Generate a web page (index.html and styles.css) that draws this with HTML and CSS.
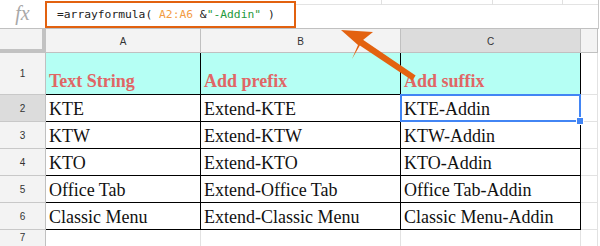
FILE: index.html
```html
<!DOCTYPE html>
<html>
<head>
<meta charset="utf-8">
<link rel="stylesheet" href="styles.css">
</head>
<body>
<div class="sheet">
  <div class="fbar">
    <div class="fx">fx</div>
    <div class="formula"><span class="ftext">=arrayformula( <span class="ref">A2:A6</span> &amp;<span class="str">"-Addin"</span> )</span></div>
    <div class="fbar-rest">
      <div class="tools"><i class="t1"></i><i class="t2"></i><i class="t3"></i></div>
    </div>
  </div>
  <div class="grid">
    <div class="corner"></div>
    <div class="ch">A</div>
    <div class="ch">B</div>
    <div class="ch sel-h">C</div>
    <div class="ch last"></div>

    <div class="rh">1</div>
    <div class="c head">Text String</div>
    <div class="c head">Add prefix</div>
    <div class="c head">Add suffix</div>
    <div class="e"></div>

    <div class="rh sel-h">2</div>
    <div class="c">KTE</div>
    <div class="c">Extend-KTE</div>
    <div class="c">KTE-Addin</div>
    <div class="e"></div>

    <div class="rh">3</div>
    <div class="c">KTW</div>
    <div class="c">Extend-KTW</div>
    <div class="c">KTW-Addin</div>
    <div class="e"></div>

    <div class="rh">4</div>
    <div class="c">KTO</div>
    <div class="c">Extend-KTO</div>
    <div class="c">KTO-Addin</div>
    <div class="e"></div>

    <div class="rh">5</div>
    <div class="c">Office Tab</div>
    <div class="c">Extend-Office Tab</div>
    <div class="c">Office Tab-Addin</div>
    <div class="e"></div>

    <div class="rh">6</div>
    <div class="c">Classic Menu</div>
    <div class="c">Extend-Classic Menu</div>
    <div class="c">Classic Menu-Addin</div>
    <div class="e"></div>

    <div class="rh r7">7</div>
    <div class="e"></div>
    <div class="e"></div>
    <div class="e"></div>
    <div class="e"></div>
  </div>
  <div class="selbox"><span class="handle"></span></div>
  <svg class="arrow" width="600" height="246" viewBox="0 0 600 246">
    <polygon points="341,30 373,32 363,40 352,59 358,45" fill="#e36210"/>
    <polygon points="362.6,39.5 415.6,75.5 412.4,80.5 358.4,44.5" fill="#e36210"/>
  </svg>
</div>
</body>
</html>
```

FILE: styles.css
```css
* { box-sizing: border-box; }
html, body { margin: 0; padding: 0; background: #fff; }
body { width: 600px; height: 246px; overflow: hidden; font-family: "Liberation Sans", Arial, sans-serif; }

.sheet { position: relative; width: 599px; }

.fbar {
  display: flex;
  height: 29px;
  border-bottom: 1px solid #c0c0c0;
  border-right: 1px solid #c8c8c8;
}
.fx {
  width: 45px;
  display: flex;
  align-items: center;
  justify-content: center;
  font-family: "Liberation Serif", serif;
  font-style: italic;
  font-size: 20px;
  color: #a8a8a8;
  padding-bottom: 1px;
}
.formula {
  width: 251px;
  margin-top: 1px;
  border: 2px solid #e2610f;
  display: flex;
  align-items: center;
  padding-left: 10px;
  padding-bottom: 1px;
  font-family: "DejaVu Sans Mono", "Liberation Mono", monospace;
  font-size: 11.3px;
  color: #222;
}
.ftext { white-space: pre; }
.formula .ref { color: #f39c43; }
.formula .str { color: #1f9a3c; }
.fbar-rest { flex: 1; }
.tools {
  height: 5px;
  border-bottom: 1px solid #e3e3e3;
  position: relative;
}
.tools i {
  position: absolute;
  top: 0;
  width: 1px;
  height: 5px;
  background: #e0e0e0;
}
.tools .t1 { left: 85px; }
.tools .t2 { left: 196px; }
.tools .t3 { left: 266px; }

.grid {
  display: grid;
  grid-template-columns: 46px 155px 200px 180px 17px;
  grid-template-rows: 24px 42px repeat(5, 27px) 16px;
  border-bottom: 1px solid #bdbdbd;
  width: 598px;
}

.corner {
  background: #f3f3f3;
  border-right: 4px solid #c2c2c2;
  border-bottom: 4px solid #c2c2c2;
}
.ch {
  background: #f3f3f3;
  border-right: 1px solid #c0c0c0;
  border-bottom: 1px solid #c0c0c0;
  display: flex;
  align-items: center;
  justify-content: center;
  font-size: 10px;
  color: #333;
  padding-top: 1px;
}
.ch.sel-h { background: #dcdcdc; }
.rh {
  background: #f3f3f3;
  border-right: 1px solid #c0c0c0;
  border-bottom: 1px solid #c8c8c8;
  display: flex;
  align-items: center;
  justify-content: center;
  font-size: 10px;
  color: #333;
}
.rh.sel-h { background: #dcdcdc; }
.rh.r7 { align-items: flex-start; padding-top: 2px; border-bottom: none; }

.c {
  border-right: 1px solid #000;
  border-bottom: 1px solid #000;
  display: flex;
  align-items: flex-end;
  padding: 0 0 2px 3px;
  font-family: "Liberation Serif", "Times New Roman", serif;
  font-size: 18px;
  line-height: 20px;
  color: #111;
  white-space: nowrap;
  overflow: hidden;
}
.c.head {
  background: #b5fff4;
  font-weight: bold;
  color: #e06666;
  padding-bottom: 3px;
}
.e {
  border-right: 1px solid #e2e2e2;
  border-bottom: 1px solid #e2e2e2;
}
.grid > .e:last-child, .grid > .e:nth-last-child(2), .grid > .e:nth-last-child(3), .grid > .e:nth-last-child(4) { border-bottom: none; }

.selbox {
  position: absolute;
  left: 400px;
  top: 94px;
  width: 181px;
  height: 28px;
  border: 2px solid #4285f4;
}
.handle {
  position: absolute;
  right: -5px;
  bottom: -5px;
  width: 6px;
  height: 6px;
  background: #4285f4;
  border: 1px solid #fff;
  box-sizing: content-box;
}
.arrow {
  position: absolute;
  left: 0;
  top: 0;
  pointer-events: none;
}
```
